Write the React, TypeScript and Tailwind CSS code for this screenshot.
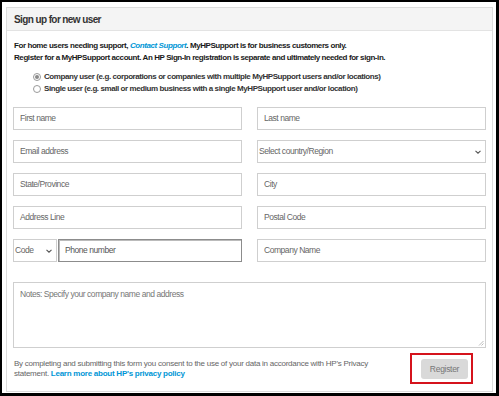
import React from 'react';

const Field: React.FC<{ placeholder: string }> = ({ placeholder }) => (
  <div className="h-[23px] border border-[#cfcfcf] flex items-center px-[6px] text-[8.5px] tracking-[-0.45px] text-[#666]">
    {placeholder}
  </div>
);

const Radio: React.FC<{ checked?: boolean; label: string }> = ({ checked, label }) => (
  <div className="flex items-center h-[12px] pl-[20px]">
    <span className="w-[8px] h-[8px] rounded-full border border-[#9a9a9a] flex items-center justify-center mr-[3px] bg-white">
      {checked && <span className="w-[4px] h-[4px] rounded-full bg-[#8a8a8a]" />}
    </span>
    <span>{label}</span>
  </div>
);

const Chevron: React.FC = () => (
  <svg width="6" height="4" viewBox="0 0 6 4" className="shrink-0">
    <path d="M0.5 0.8 L3 3.2 L5.5 0.8" fill="none" stroke="#555" strokeWidth="1.1" />
  </svg>
);

const App: React.FC = () => {
  return (
    <div className="w-[499px] h-[396px] bg-white border-black border-2 border-r-[3px] border-b-[3px] pt-[5px] pl-[4px] pr-[3px] pb-[1px] font-['Liberation_Sans',Arial,sans-serif] text-[#333]">
      <div className="h-full border border-[#dcdcdc] flex flex-col">
        {/* Header */}
        <div className="h-[23px] bg-[#f4f4f4] border-b border-[#e3e3e3] flex items-center px-[7px] text-[10px] tracking-[-0.6px] font-bold text-[#333]">
          Sign up for new user
        </div>

        {/* Body */}
        <div className="flex-1 px-[6px] pt-[9px]">
          <div className="pl-[1px] text-[8px] tracking-[-0.42px] font-bold leading-[12px] text-[#1a1a1a]">
            <p>
              For home users needing support, <span className="italic text-[#0096d6]">Contact Support</span>. MyHPSupport is for business customers only.
            </p>
            <p>Register for a MyHPSupport account. An HP Sign-In registration is separate and ultimately needed for sign-in.</p>
          </div>

          <div className="mt-[7px] text-[8px] tracking-[-0.42px] font-bold text-[#333]">
            <Radio checked label="Company user (e.g. corporations or companies with multiple MyHPSupport users and/or locations)" />
            <Radio label="Single user (e.g. small or medium business with a single MyHPSupport user and/or location)" />
          </div>

          <div className="mt-[12px] grid grid-cols-2 gap-x-[15px] gap-y-[10px]">
            <Field placeholder="First name" />
            <Field placeholder="Last name" />
            <Field placeholder="Email address" />
            <div className="h-[23px] border border-[#cfcfcf] flex items-center justify-between pl-[1px] pr-[4px] text-[8.5px] tracking-[-0.45px] text-[#666]">
              <span>Select country/Region</span>
              <Chevron />
            </div>
            <Field placeholder="State/Province" />
            <Field placeholder="City" />
            <Field placeholder="Address Line" />
            <Field placeholder="Postal Code" />
            <div className="flex h-[23px] gap-[1px]">
              <div className="w-[44px] border border-[#cfcfcf] flex items-center justify-between pl-[1px] pr-[4px] text-[8.5px] tracking-[-0.45px] text-[#666]">
                <span>Code</span>
                <Chevron />
              </div>
              <div className="flex-1 border border-[#8c8c8c] shadow-[inset_1px_1px_0_#bbb] flex items-center px-[6px] text-[8.5px] tracking-[-0.45px] text-[#555]">
                Phone number
              </div>
            </div>
            <Field placeholder="Company Name" />
          </div>

          <div className="relative mt-[20px] h-[66px] border border-[#cfcfcf] px-[6px] pt-[5px] text-[8.5px] tracking-[-0.45px] text-[#777]">
            Notes: Specify your company name and address
            <svg width="6" height="6" viewBox="0 0 6 6" className="absolute right-[1px] bottom-[1px]">
              <path d="M5.5 1 L1 5.5 M5.5 3.5 L3.5 5.5" stroke="#aaa" strokeWidth="0.8" />
            </svg>
          </div>

          <div className="flex items-start mt-[5px]">
            <p className="flex-1 pl-[1px] pt-[6px] text-[8px] tracking-[-0.25px] leading-[10px] text-[#666]">
              By completing and submitting this form you consent to the use of your data in accordance with HP's Privacy
              <br />
              statement. <span className="font-bold text-[#0096d6]">Learn more about HP's privacy policy</span>
            </p>
            <div className="flex mr-[13px] border-2 border-[#d5131c] pl-[9px] pr-[3px] pt-[4px] pb-[3px]">
              <button className="w-[47px] h-[20px] rounded-[3px] bg-[#d9d9d9] text-[8.5px] tracking-[-0.3px] text-[#777]">Register</button>
            </div>
          </div>
        </div>
      </div>
    </div>
  );
};

export default App;
